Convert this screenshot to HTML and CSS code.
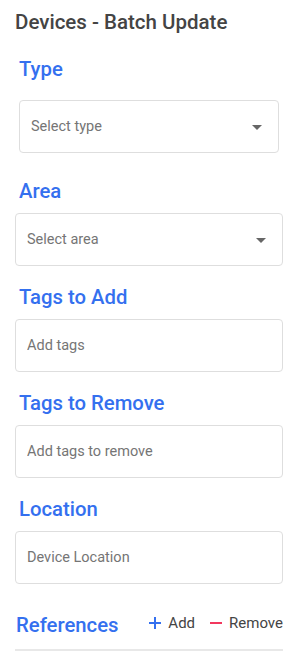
FILE: index.html
```
<!DOCTYPE html>
<html lang="en">
<head>
  <meta charset="UTF-8">
  <meta name="viewport" content="width=device-width, initial-scale=1.0">
  <title>Devices - Batch Update</title>
  <link rel="stylesheet" href="styles.css">
</head>
<body>
  <div class="panel">
    <h1>Devices - Batch Update</h1>

    <div class="field field-type">
      <label class="field-label">Type</label>
      <div class="select">
        <span class="placeholder">Select type</span>
        <svg class="caret" viewBox="0 0 24 24" width="24" height="24"><path d="M7 10l5 5 5-5z"/></svg>
      </div>
    </div>

    <div class="field field-area">
      <label class="field-label">Area</label>
      <div class="select">
        <span class="placeholder">Select area</span>
        <svg class="caret" viewBox="0 0 24 24" width="24" height="24"><path d="M7 10l5 5 5-5z"/></svg>
      </div>
    </div>

    <div class="field">
      <label class="field-label" for="tagsAdd">Tags to Add</label>
      <input class="text-input" id="tagsAdd" type="text" placeholder="Add tags">
    </div>

    <div class="field">
      <label class="field-label" for="tagsRemove">Tags to Remove</label>
      <input class="text-input" id="tagsRemove" type="text" placeholder="Add tags to remove">
    </div>

    <div class="field">
      <label class="field-label" for="location">Location</label>
      <input class="text-input" id="location" type="text" placeholder="Device Location">
    </div>

    <div class="refs">
      <span class="field-label">References</span>
      <div class="refs-actions">
        <button type="button" class="link-btn">
          <svg viewBox="0 0 12 12" width="12" height="12"><path d="M6 0v12M0 6h12" stroke="#3470ef" stroke-width="2"/></svg>
          Add
        </button>
        <button type="button" class="link-btn">
          <svg viewBox="0 0 12 12" width="12" height="12"><path d="M0 6h12" stroke="#f2385e" stroke-width="2"/></svg>
          Remove
        </button>
      </div>
    </div>
    <div class="divider"></div>
  </div>
</body>
</html>
```

FILE: styles.css
```
body {
  margin: 0;
  font-family: Roboto, "Liberation Sans", sans-serif;
  background: #fff;
}

.panel {
  padding: 0 11px 0 15px;
}

h1 {
  margin: 10px 0 0;
  font-size: 20.5px;
  font-weight: 500;
  line-height: 24px;
  color: #444;
}

.field {
  display: flex;
  flex-direction: column;
  margin-top: 19px;
}

.field-label {
  font-size: 20.3px;
  font-weight: 500;
  line-height: 24px;
  color: #3470ef;
  margin-bottom: 10px;
  padding-left: 4px;
}

.field-type {
  margin: 23px 4px 0;
}

.field-type .field-label {
  margin-bottom: 19px;
  padding-left: 0;
}

.field-area {
  margin-top: 26px;
}

.select,
.text-input {
  box-sizing: border-box;
  height: 53px;
  border: 1px solid #dedede;
  border-radius: 4px;
  background: #fff;
}

.select {
  display: flex;
  align-items: center;
  justify-content: space-between;
  padding: 0 9px 0 11px;
}

.placeholder {
  font-size: 14.5px;
  color: #757575;
}

.caret {
  fill: #666;
}

.text-input {
  width: 100%;
  padding: 0 11px;
  font-family: inherit;
  font-size: 14.5px;
  color: #333;
  outline: none;
}

.text-input::placeholder {
  color: #757575;
}

.refs {
  display: flex;
  justify-content: space-between;
  align-items: flex-start;
  margin-top: 29px;
}

.refs .field-label {
  margin-bottom: 0;
  padding-left: 1px;
}

.refs-actions {
  display: flex;
  gap: 15px;
}

.link-btn {
  display: flex;
  align-items: center;
  gap: 7px;
  padding: 0;
  border: none;
  background: none;
  font-family: inherit;
  font-size: 15px;
  line-height: 20px;
  color: #444;
  cursor: pointer;
}

.divider {
  height: 2px;
  margin-top: 12px;
  background: #e8e8e8;
}
```
